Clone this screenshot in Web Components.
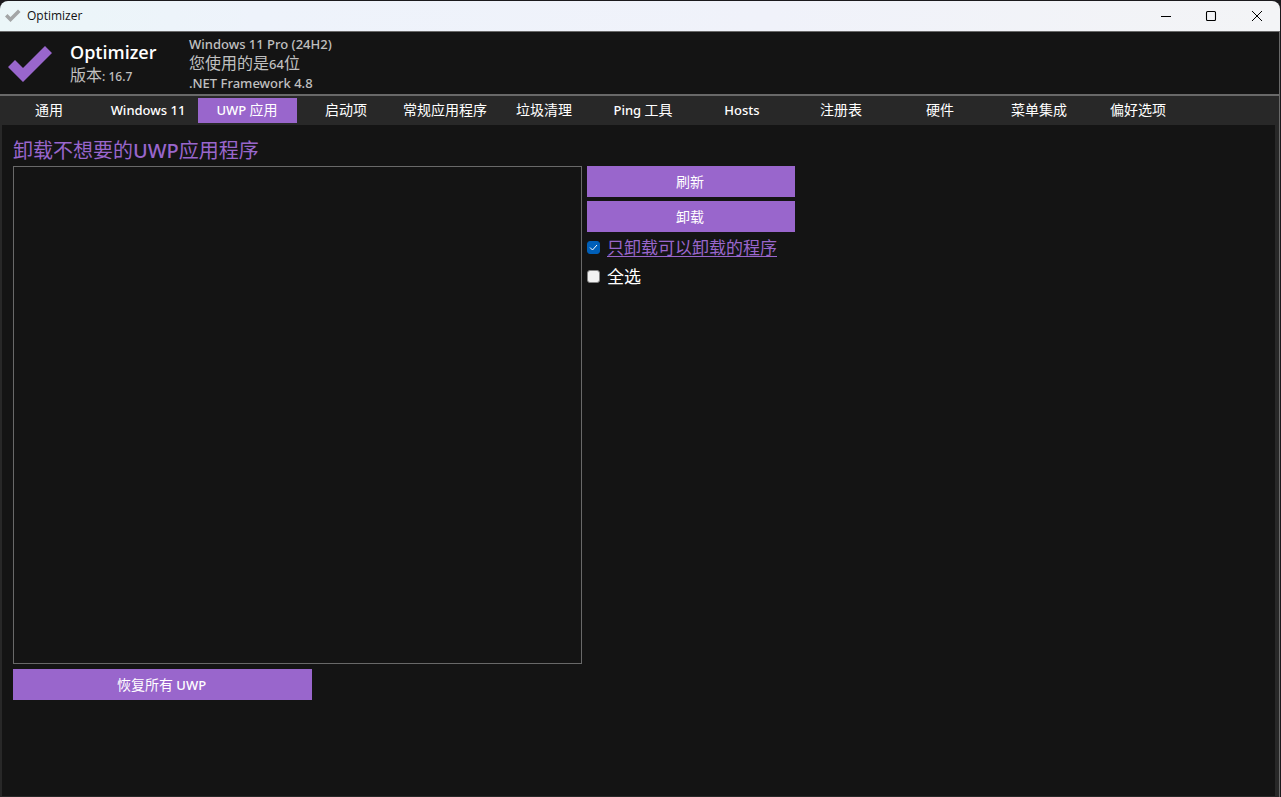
<!DOCTYPE html>
<html lang="zh-CN">
<head>
<meta charset="utf-8">
<title>Optimizer</title>
<style>
  html, body { height: 100%; }
  body {
    margin: 0;
    background: #1b1a1d;
    color: #fff;
    font: 500 13px/20px "Noto Sans", "Noto Sans CJK SC", sans-serif;
    --accent: #9966cc;
    --surface: #141414;
    --bar: #282828;
    --line: #696969;
  }
</style>
</head>
<body>
<app-window>
  <title-bar slot="title">Optimizer</title-bar>
  <app-header slot="header"></app-header>
  <tab-bar slot="tabs">
    <tab-item><big-text>通用</big-text></tab-item>
    <tab-item>Windows 11</tab-item>
    <tab-item selected>UWP <big-text>应用</big-text></tab-item>
    <tab-item><big-text>启动项</big-text></tab-item>
    <tab-item><big-text>常规应用程序</big-text></tab-item>
    <tab-item><big-text>垃圾清理</big-text></tab-item>
    <tab-item>Ping <big-text>工具</big-text></tab-item>
    <tab-item>Hosts</tab-item>
    <tab-item><big-text>注册表</big-text></tab-item>
    <tab-item><big-text>硬件</big-text></tab-item>
    <tab-item><big-text>菜单集成</big-text></tab-item>
    <tab-item><big-text>偏好选项</big-text></tab-item>
  </tab-bar>
  <uwp-panel></uwp-panel>
</app-window>

<script>
function define(name, html, setup) {
  const template = document.createElement('template');
  template.innerHTML = html;
  customElements.define(name, class extends HTMLElement {
    constructor() {
      super();
      this.attachShadow({ mode: 'open' }).append(template.content.cloneNode(true));
    }
    connectedCallback() { if (setup) setup(this, this.shadowRoot); }
  });
}

/* CJK run set one step larger than the Latin text around it */
define('big-text', `
<style>:host { display: inline; font-size: 14px; font-weight: 400; }</style><slot></slot>`);

define('app-window', `
<style>
  :host { display: flex; flex-direction: column; box-sizing: border-box; height: 100vh; padding: 1px 1px 0 0; }
  .frame { flex: 1; display: flex; flex-direction: column; min-height: 0; border-radius: 8px 8px 0 0; overflow: hidden; background: var(--bar); }
  .body { flex: 1; display: flex; flex-direction: column; min-height: 0; border-top: 1px solid var(--line); border-right: 1px solid var(--line); }
  main { flex: 1; display: flex; min-height: 0; padding: 0 4px 1px 2px; }
  main ::slotted(*) { flex: 1; min-width: 0; }
</style>
<div class="frame">
  <slot name="title"></slot>
  <div class="body">
    <slot name="header"></slot>
    <slot name="tabs"></slot>
    <main><slot></slot></main>
  </div>
</div>`);

define('title-bar', `
<style>
  :host { display: flex; align-items: center; height: 30px; padding-left: 5px; background: linear-gradient(90deg, #ebf6f8, #eef3fb 20%, #f0f2fa 60%, #f3f4f6); color: #111; font: 400 12px/16px "Open Sans", sans-serif; }
  .name { flex: 1; margin-left: 6px; }
  svg { display: block; }
  button { width: 46px; height: 30px; padding: 0 0 1px; border: 0; background: none; display: grid; place-items: center; }
</style>
<svg width="16" height="14" viewBox="0 0 16 14" aria-hidden="true"><path d="M0 7.5 2.5 5 5.5 8 13 0.5 15.5 3 5.5 13z" fill="#a3a5a6"/></svg>
<span class="name"><slot></slot></span>
<button aria-label="最小化"><svg width="12" height="12"><path d="M2 6.5h10" stroke="#000" fill="none"/></svg></button>
<button aria-label="最大化"><svg width="12" height="12"><rect x="1.5" y="1.5" width="9" height="9" rx="1" stroke="#000" stroke-width="1.1" fill="none"/></svg></button>
<button aria-label="关闭"><svg width="12" height="12"><path d="M1 1 11 11M11 1 1 11" stroke="#000" fill="none"/></svg></button>`);

define('app-header', `
<style>
  :host { display: flex; height: 62px; border-bottom: 2px solid var(--line); background: var(--surface); color: #c0c0c0; }
  svg { display: block; margin: 14px 0 0 8px; }
  .product { width: 119px; margin-left: 17px; padding-top: 8px; }
  h1 { margin: 0; color: #fff; font: 600 18px/24px "Open Sans", sans-serif; }
  p { margin: 0; }
  .version { line-height: 26px; font-size: 12px; }
  .system { padding-top: 3px; line-height: 19px; }
  .cjk { font-size: 16px; font-weight: 400; line-height: 19px; }
</style>
<svg width="45" height="37" viewBox="0 0 45 37" aria-hidden="true"><path d="M0 21 7 14 15 22 37 0 44 7 15 36z" fill="#9966cc"/></svg>
<div class="product">
  <h1>Optimizer</h1>
  <p class="version"><span class="cjk">版本</span>: 16.7</p>
</div>
<div class="system">
  <p>Windows 11 Pro (24H2)</p>
  <p><span class="cjk">您使用的是</span>64<span class="cjk">位</span></p>
  <p>.NET Framework 4.8</p>
</div>`);

define('tab-bar', `
<style>:host { display: flex; height: 25px; padding: 2px 0; background: var(--bar); }</style>
<slot></slot>`, el => el.setAttribute('role', 'tablist'));

define('tab-item', `
<style>
  :host { display: block; flex: 0 1 99px; }
  button { width: 100%; height: 25px; padding: 0 1px 1px 0; border: 0; background: none; color: #fff; font: inherit; line-height: 24px; white-space: nowrap; }
  :host([selected]) button { background: var(--accent); }
</style>
<button role="tab"><slot></slot></button>`, (el, root) => {
  root.querySelector('button').setAttribute('aria-selected', el.hasAttribute('selected'));
});

define('accent-button', `
<style>
  :host { display: block; }
  button { display: block; width: 100%; height: 31px; padding: 0 2px 0 0; border: 0; background: var(--accent); color: #fff; font: inherit; }
</style>
<button><slot></slot></button>`);

define('check-option', `
<style>
  :host { display: block; color: #fff; }
  :host([link]) { color: var(--accent); }
  :host([link]) span { text-decoration: underline; text-underline-offset: 2px; text-decoration-thickness: 1px; }
  label { display: flex; align-items: center; gap: 7px; font-size: 17px; font-weight: 400; line-height: 24px; white-space: nowrap; }
  input { appearance: none; width: 13px; height: 13px; margin: 0 0 1px; box-sizing: border-box; border: 1px solid #858585; border-radius: 3px; background: #f3f3f3; }
  input:checked { border-color: #005fb8; background: #005fb8 url("data:image/svg+xml,%3Csvg xmlns='http://www.w3.org/2000/svg' viewBox='0 0 11 11'%3E%3Cpath d='M2 5.5 4.5 8 9 3' fill='none' stroke='%23fff'/%3E%3C/svg%3E") center / 11px no-repeat; }
</style>
<label><input type="checkbox"><span><slot></slot></span></label>`, (el, root) => {
  root.querySelector('input').checked = el.hasAttribute('checked');
});

define('uwp-panel', `
<style>
  :host { display: flex; flex-direction: column; box-sizing: border-box; padding: 12px 0 96px 11px; background: var(--surface); }
  h2 { margin: 0; color: var(--accent); font-size: 20px; line-height: 28px; height: 29px; font-weight: 400; }
  h2 span { font-weight: 500; }
  .columns { flex: 1; min-height: 0; display: grid; grid-template-columns: minmax(0, 569fr) 208px minmax(0, 475fr); column-gap: 5px; }
  .list { border: 1px solid var(--line); }
  .actions { display: flex; flex-direction: column; gap: 4px; }
  check-option + check-option { margin-top: 1px; }
  .restore { width: 299px; margin-top: 5px; }
</style>
<h2>卸载不想要的<span>UWP</span>应用程序</h2>
<div class="columns">
  <div class="list" role="listbox" aria-label="UWP"></div>
  <div class="actions">
    <accent-button><big-text>刷新</big-text></accent-button>
    <accent-button><big-text>卸载</big-text></accent-button>
    <check-option link checked>只卸载可以卸载的程序</check-option>
    <check-option>全选</check-option>
  </div>
</div>
<accent-button class="restore"><big-text>恢复所有</big-text> UWP</accent-button>`);
</script>
</body>
</html>
